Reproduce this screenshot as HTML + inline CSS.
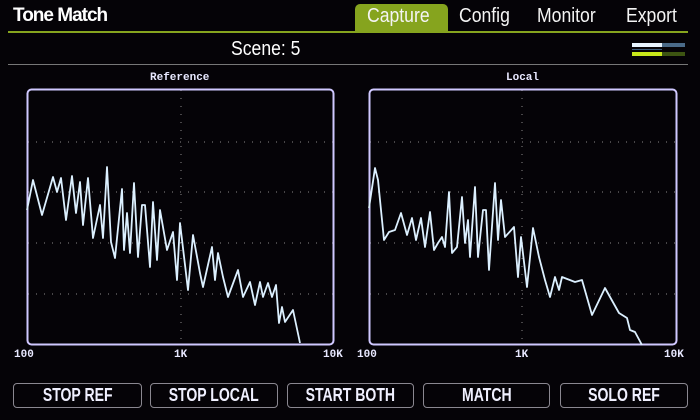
<!DOCTYPE html><html><head><style>
body{margin:0;width:700px;height:420px;background:#050307;overflow:hidden;position:relative;font-family:"Liberation Sans",sans-serif;color:#fff}
.a{position:absolute}
.tab{position:absolute;top:5px;font-size:20px;color:#f4f4f4;transform:scaleX(.88);transform-origin:left}
.btn{position:absolute;top:383px;height:25px;border:1.5px solid #8a8790;border-radius:4px;box-sizing:border-box;font-size:18px;font-weight:bold;text-align:center;line-height:23px;color:#f0f0ff}
.btn span{display:inline-block;transform:scaleX(.78)}
.ax{position:absolute;top:349px;font:bold 11px "Liberation Mono",monospace;color:#e8e8ff}
.lbl{position:absolute;top:72px;font:bold 11px "Liberation Mono",monospace;color:#e8e8ff}
</style></head><body>
<div class="a" style="left:13px;top:5px;font-size:19px;font-weight:bold;letter-spacing:-1px">Tone Match</div>
<div class="a" style="left:355px;top:4px;width:93px;height:28px;background:#86a41e;border-radius:5px 5px 0 0"></div>
<div class="tab" style="left:367px">Capture</div>
<div class="tab" style="left:459px">Config</div>
<div class="tab" style="left:537px">Monitor</div>
<div class="tab" style="left:626px">Export</div>
<div class="a" style="left:8px;top:31px;width:680px;height:2px;background:#86a41e"></div>
<div class="a" style="left:231px;top:38px;font-size:20px;transform:scaleX(.88);transform-origin:left">Scene: 5</div>
<div class="a" style="left:8px;top:64px;width:680px;height:1px;background:#777"></div>
<div class="a" style="left:632px;top:43px;width:30px;height:4px;background:#e8f4ff"></div>
<div class="a" style="left:662px;top:43px;width:23px;height:4px;background:#4a6a88"></div>
<div class="a" style="left:632px;top:49px;width:30px;height:1px;background:#3a5a7a"></div>
<div class="a" style="left:632px;top:52px;width:30px;height:4px;background:#c8e81a"></div>
<div class="a" style="left:662px;top:52px;width:23px;height:4px;background:#3d5512"></div>
<div class="lbl" style="left:150px">Reference</div>
<div class="lbl" style="left:506px">Local</div>
<svg class="a" style="left:0;top:0" width="700" height="420">
<g fill="none" stroke="#8a8a8a" stroke-width="1" stroke-dasharray="1 7">
<line x1="28" y1="142" x2="333" y2="142"/><line x1="28" y1="192" x2="333" y2="192"/><line x1="28" y1="243" x2="333" y2="243"/><line x1="28" y1="294" x2="333" y2="294"/><line x1="181" y1="90" x2="181" y2="344"/>
<line x1="370" y1="142" x2="676" y2="142"/><line x1="370" y1="192" x2="676" y2="192"/><line x1="370" y1="243" x2="676" y2="243"/><line x1="370" y1="294" x2="676" y2="294"/><line x1="522" y1="90" x2="522" y2="344"/>
</g>
<rect x="27.5" y="89.5" width="306" height="255" rx="4" fill="none" stroke="#d0c8ff" stroke-width="2"/>
<rect x="369.5" y="89.5" width="307" height="255" rx="4" fill="none" stroke="#d0c8ff" stroke-width="2"/>
<g fill="none" stroke="#dcf0ff" stroke-width="1.8" stroke-linejoin="round">
<polyline points="27,210 33,180 42,215 53,177 57,192 61,178 66,220 72,176 76,213 80,182 83,225 88,178 93,238 100,205 103,238 107,167 111,242 115,258 122,189 124,250 127,213 130,253 134,183 138,257 142,205 145,205 150,267 153,202 157,260 160,210 167,250 173,232 177,280 180,223 188,290 193,235 200,273 203,287 212,247 215,280 218,253 223,277 228,297 238,270 243,297 250,282 255,305 260,282 263,297 268,283 272,297 276,285 279,323 282,307 285,322 293,310 300,343"/>
<polyline points="369,208 375,168 378,180 384,240 389,232 395,230 401,213 407,235 412,218 416,240 421,218 425,247 430,212 434,250 438,243 442,237 445,247 449,192 452,253 457,247 462,197 465,243 468,220 470,257 475,187 478,257 483,210 486,210 489,270 495,183 498,240 501,200 505,237 514,227 518,277 521,237 527,287 533,228 539,257 545,280 550,297 555,277 559,290 562,277 575,282 582,280 592,315 605,288 619,313 627,318 630,330 635,332 642,345"/>
</g></svg>
<div class="ax" style="left:14px">100</div><div class="ax" style="left:174px">1K</div><div class="ax" style="left:323px">10K</div>
<div class="ax" style="left:357px">100</div><div class="ax" style="left:515px">1K</div><div class="ax" style="left:664px">10K</div>
<div class="btn" style="left:13px;width:129px"><span>STOP REF</span></div>
<div class="btn" style="left:150px;width:128px"><span>STOP LOCAL</span></div>
<div class="btn" style="left:287px;width:127px"><span>START BOTH</span></div>
<div class="btn" style="left:423px;width:127px"><span>MATCH</span></div>
<div class="btn" style="left:560px;width:128px"><span>SOLO REF</span></div>
</body></html>
